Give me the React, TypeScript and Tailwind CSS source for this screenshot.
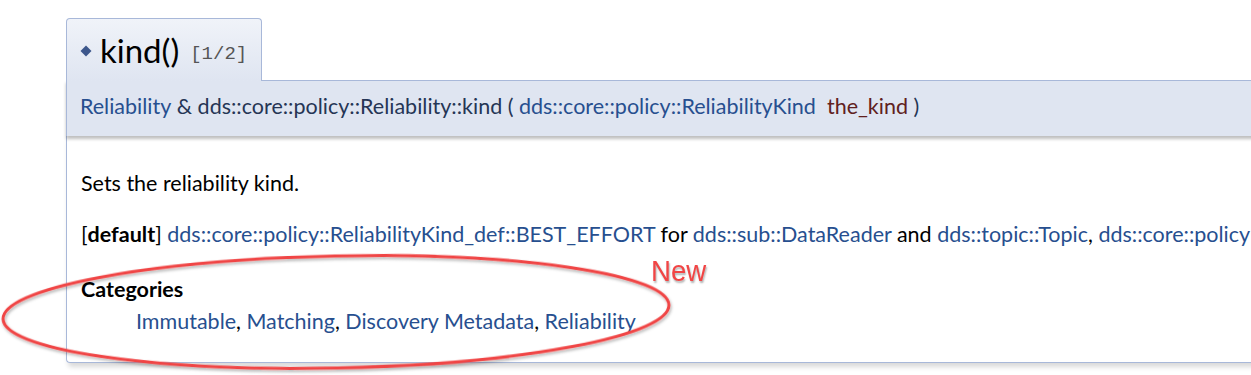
import React from "react";

const LINK = "text-[#274f8f]";

function Diamond() {
  return (
    <svg width="12" height="12" viewBox="0 0 12 12" className="mr-[8px] mt-[2px]">
      <polygon points="6,0.5 11.5,6 6,11.5 0.5,6" fill="#3d578c" />
    </svg>
  );
}

export default function App() {
  return (
    <div
      className="relative w-[1251px] h-[375px] overflow-hidden bg-white"
      style={{ fontFamily: "Lato, 'Noto Sans', sans-serif" }}
    >
      <div className="pl-[66px] pt-[18px] w-[1400px]">
        {/* tab */}
        <div className="relative z-10 -mb-px w-[196px] h-[63px] rounded-t-[4px] border border-b-0 border-[#a8b8d9] bg-gradient-to-b from-[#f0f3f9] to-[#dfe5f1] pl-[13px] flex items-center">
          <Diamond />
          <span className="text-[33px] text-black leading-none">kind()</span>
          <span
            className="ml-[11px] mt-[8px] text-[19px] text-[#555] leading-none"
            style={{ fontFamily: "'Liberation Mono', 'DejaVu Sans Mono', monospace" }}
          >
            [1/2]
          </span>
        </div>

        {/* prototype */}
        <div className="relative h-[56px] border-t border-l border-[#a8b8d9] bg-[#dfe5f1] pl-[13px] pb-[4px] flex items-center shadow-[0_3px_3px_rgba(0,0,0,0.25)] text-[21.5px] text-[#253555] whitespace-pre">
          <span className={LINK}>Reliability</span>
          <span> &amp; dds::core::policy::Reliability::kind ( </span>
          <span className={LINK}>dds::core::policy::ReliabilityKind</span>
          <span>  </span>
          <span className="text-[#602020]">the_kind</span>
          <span> )</span>
        </div>

        {/* doc */}
        <div className="h-[227px] border-l border-b border-[#a8b8d9] rounded-bl-[4px] shadow-[2px_4px_5px_rgba(0,0,0,0.15)] pl-[14px] pt-[34px] text-[21.5px] leading-[26px] text-black whitespace-nowrap">
          <p>Sets the reliability kind.</p>
          <p className="mt-[25px]">
            [<b>default</b>] <span className={LINK}>dds::core::policy::ReliabilityKind_def::BEST_EFFORT</span> for{" "}
            <span className={LINK}>dds::sub::DataReader</span> and <span className={LINK}>dds::topic::Topic</span>,{" "}
            <span className={LINK}>dds::core::policy</span>
          </p>
          <p className="mt-[29px] font-bold">Categories</p>
          <p className="mt-[6px] pl-[55px]">
            <span className={LINK}>Immutable</span>, <span className={LINK}>Matching</span>,{" "}
            <span className={LINK}>Discovery Metadata</span>, <span className={LINK}>Reliability</span>
          </p>
        </div>
      </div>

      {/* annotation */}
      <svg className="absolute left-0 top-0 pointer-events-none" width="1251" height="375">
        <defs>
          <filter id="sh" x="-10%" y="-10%" width="120%" height="130%">
            <feDropShadow dx="1" dy="2" stdDeviation="1.5" floodColor="#000" floodOpacity="0.3" />
          </filter>
        </defs>
        <ellipse
          cx="336"
          cy="312"
          rx="333"
          ry="56"
          transform="rotate(-1.2 336 312)"
          fill="none"
          stroke="#f04545"
          strokeWidth="3"
          filter="url(#sh)"
        />
      </svg>
      <div
        className="absolute left-[651px] top-[256px] text-[30px] leading-none text-[#f24444] scale-x-[0.92] origin-left"
        style={{ fontFamily: "'Liberation Sans', Arial, sans-serif", textShadow: "1px 2px 2px rgba(0,0,0,0.3)" }}
      >
        New
      </div>
    </div>
  );
}
